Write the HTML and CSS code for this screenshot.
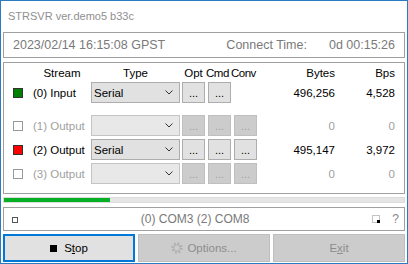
FILE: index.html
```html
<!DOCTYPE html>
<html lang="en">
<head>
    <meta charset="UTF-8">
    <meta name="viewport" content="width=device-width, initial-scale=1.0">
    <title>STRSVR</title>
    <link rel="stylesheet" href="styles.css">
</head>
<body>
    <div class="window">
        <!-- Title bar -->
        <div class="titlebar">STRSVR ver.demo5 b33c</div>

        <!-- Time / connect time -->
        <div class="infobox">
            <span>2023/02/14 16:15:08 GPST</span>
            <span class="connect">Connect Time:</span>
            <span class="elapsed">0d 00:15:26</span>
        </div>

        <!-- Streams -->
        <div class="streams">
            <div class="row head">
                <span class="hdr-stream">Stream</span>
                <span class="hdr hdr-type">Type</span>
                <span class="hdr">Opt</span>
                <span class="hdr hdr-cmd">Cmd</span>
                <span class="hdr hdr-conv">Conv</span>
                <span class="num">Bytes</span>
                <span class="num">Bps</span>
            </div>

            <div class="row">
                <span class="chk green"></span>
                <span class="label">(0) Input</span>
                <div class="combo"><span>Serial</span><svg class="chev" width="8" height="5" viewBox="0 0 8 5"><polyline points="0.5,0.5 4,4 7.5,0.5" fill="none" stroke="#333" stroke-width="1"/></svg></div>
                <button class="dots">...</button>
                <button class="dots">...</button>
                <span></span>
                <span class="num">496,256</span>
                <span class="num">4,528</span>
            </div>

            <div class="row sep">
                <span class="chk off"></span>
                <span class="label off">(1) Output</span>
                <div class="combo off"><span></span><svg class="chev" width="8" height="5" viewBox="0 0 8 5"><polyline points="0.5,0.5 4,4 7.5,0.5" fill="none" stroke="#333" stroke-width="1"/></svg></div>
                <button class="dots" disabled>...</button>
                <button class="dots" disabled>...</button>
                <button class="dots" disabled>...</button>
                <span class="num off">0</span>
                <span class="num off">0</span>
            </div>

            <div class="row next">
                <span class="chk red"></span>
                <span class="label">(2) Output</span>
                <div class="combo"><span>Serial</span><svg class="chev" width="8" height="5" viewBox="0 0 8 5"><polyline points="0.5,0.5 4,4 7.5,0.5" fill="none" stroke="#333" stroke-width="1"/></svg></div>
                <button class="dots">...</button>
                <button class="dots">...</button>
                <button class="dots">...</button>
                <span class="num">495,147</span>
                <span class="num">3,972</span>
            </div>

            <div class="row next">
                <span class="chk off"></span>
                <span class="label off">(3) Output</span>
                <div class="combo off"><span></span><svg class="chev" width="8" height="5" viewBox="0 0 8 5"><polyline points="0.5,0.5 4,4 7.5,0.5" fill="none" stroke="#333" stroke-width="1"/></svg></div>
                <button class="dots" disabled>...</button>
                <button class="dots" disabled>...</button>
                <button class="dots" disabled>...</button>
                <span class="num off">0</span>
                <span class="num off">0</span>
            </div>
        </div>

        <!-- Progress -->
        <div class="progress"><div class="fill" style="width: 26.5%;"></div></div>

        <!-- Status -->
        <div class="status">
            <span class="mini"></span>
            <span class="ports">(0) COM3 (2) COM8</span>
            <svg class="grip" width="9" height="9" viewBox="0 0 9 9">
                <rect x="0.5" y="0.5" width="7" height="7" fill="none" stroke="#888" stroke-width="1" stroke-dasharray="1 1"/>
                <rect x="5" y="5" width="3" height="3" fill="#000"/>
            </svg>
            <span class="help">?</span>
        </div>

        <!-- Buttons -->
        <div class="buttons">
            <button class="btn focus"><span class="stop-icon"></span><span>S<u>t</u>op</span></button>
            <button class="btn" disabled>
                <svg width="12" height="12" viewBox="0 0 12 12">
                    <circle cx="6" cy="6" r="4.6" fill="none" stroke="#b0b0b0" stroke-width="2.4" stroke-dasharray="1.8 1.8"/>
                    <circle cx="6" cy="6" r="3.2" fill="none" stroke="#b0b0b0" stroke-width="1"/>
                </svg>
                <span>Options...</span>
            </button>
            <button class="btn" disabled><span>E<u>x</u>it</span></button>
        </div>
    </div>
</body>
</html>
```

FILE: styles.css
```css
/* General Reset */
body, html {
    margin: 0;
    padding: 0;
    font-family: "Liberation Sans", Arial, sans-serif;
    background-color: #fff;
    color: #000;
}
/* Window frame */
.window {
    width: 408px;
    height: 264px;
    box-sizing: border-box;
    border: 1px solid #2b7bc0;
    background: #fff;
    padding: 0 2px 1px 2px;
    display: flex;
    flex-direction: column;
}
.titlebar {
    height: 31px;
    box-sizing: border-box;
    padding: 0 0 1px 5px;
    display: flex;
    align-items: center;
    font-size: 11px;
    color: #8f8f8f;
}
/* Time box */
.infobox {
    height: 26px;
    box-sizing: border-box;
    border: 1px solid #a0a0a0;
    display: flex;
    align-items: center;
    padding: 0 9px;
    font-size: 12.5px;
    color: #7a7a7a;
}
.infobox .connect {
    margin-left: auto;
}
.infobox .elapsed {
    margin-left: 22px;
}
/* Stream table */
.streams {
    margin-top: 4px;
    height: 132px;
    box-sizing: border-box;
    border: 1px solid #a0a0a0;
    padding: 0 8px 9px 9px;
    font-size: 11.5px;
}
.row {
    display: grid;
    grid-template-columns: 20px 58px 91px 26px 26px 23px 78px 60px;
    align-items: center;
    height: 21px;
}
.row.head {
    height: 19px;
}
.row.sep {
    margin-top: 12px;
}
.row.next {
    margin-top: 3px;
}
.hdr-stream {
    grid-column: 2;
    text-align: center;
}
.hdr {
    width: 23px;
    display: flex;
    justify-content: center;
    white-space: nowrap;
}
.hdr.hdr-type {
    width: 89px;
}
.hdr.hdr-cmd {
    justify-content: flex-start;
    margin-left: -2px;
    letter-spacing: -0.5px;
}
.hdr.hdr-conv {
    justify-content: flex-start;
    margin-left: -3px;
    letter-spacing: -0.5px;
}
.num {
    justify-self: end;
}
.num.off, .label.off {
    color: #a0a0a0;
}
.chk {
    width: 10px;
    height: 10px;
    box-sizing: border-box;
    border: 1px solid #333;
}
.chk.green {
    background: #008000;
}
.chk.red {
    background: #ff0000;
}
.chk.off {
    background: #fff;
    border-color: #999;
}
.combo {
    width: 89px;
    height: 21px;
    box-sizing: border-box;
    border: 1px solid #adadad;
    background: #e1e1e1;
    display: flex;
    align-items: center;
    padding: 0 6px 0 2px;
}
.combo.off {
    background: #e8e8e8;
    border-color: #c4c4c4;
}
.combo .chev {
    margin-left: auto;
}
.dots {
    width: 23px;
    height: 21px;
    box-sizing: border-box;
    border: 1px solid #adadad;
    background: #e1e1e1;
    padding: 0;
    font-family: inherit;
    font-size: 11px;
    color: #000;
}
.dots:disabled {
    background: #cccccc;
    border-color: #bfbfbf;
    color: #a0a0a0;
}
/* Progress */
.progress {
    margin-top: 3px;
    height: 6px;
    box-sizing: border-box;
    border: 1px solid #dcdcdc;
    background: #e6e6e6;
}
.progress .fill {
    height: 100%;
    background: #06b025;
}
/* Status bar */
.status {
    margin-top: 4px;
    height: 24px;
    box-sizing: border-box;
    border: 1px solid #a0a0a0;
    display: flex;
    align-items: center;
    padding: 0 5px 0 8px;
    font-size: 12px;
    color: #7a7a7a;
}
.status .mini {
    width: 6px;
    height: 6px;
    box-sizing: border-box;
    border: 1px solid #555;
    margin-top: 1px;
}
.status .ports {
    flex: 1;
    text-align: center;
}
.status .grip {
    margin-right: 11px;
}
.status .help {
    color: #888;
}
/* Buttons */
.buttons {
    margin-top: 3px;
    height: 28px;
    display: grid;
    grid-template-columns: repeat(3, 1fr);
    gap: 3px;
}
.btn {
    box-sizing: border-box;
    border: 1px solid #adadad;
    background: #e1e1e1;
    display: flex;
    align-items: center;
    justify-content: center;
    gap: 7px;
    padding: 0;
    font-family: inherit;
    font-size: 11.5px;
    color: #000;
}
.btn.focus {
    border: 2px solid #0078d7;
}
.btn:disabled {
    background: #cccccc;
    border-color: #bfbfbf;
    color: #8c8c8c;
}
.btn.focus .stop-icon {
    width: 7px;
    height: 7px;
    background: #000;
}
.btn:disabled svg + span {
    margin-left: -3px;
}
```
